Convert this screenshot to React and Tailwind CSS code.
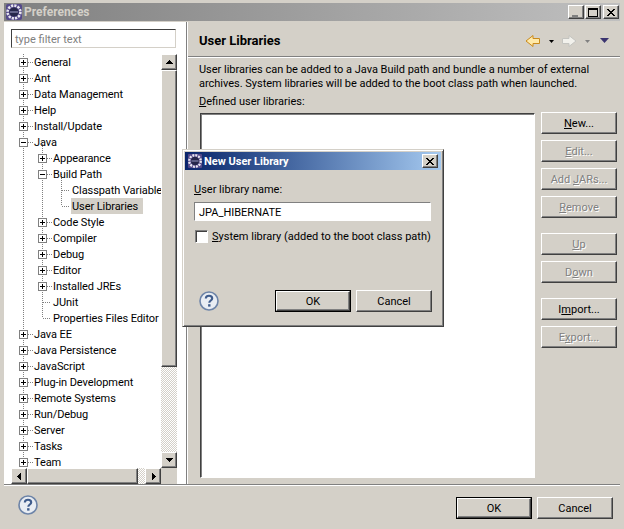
import React from "react";

const raised = "border border-t-white border-l-white border-r-[#404040] border-b-[#404040] shadow-[inset_-1px_-1px_0_#808080] bg-[#d4d0c8]";

function Logo() {
  return (
    <svg width="16" height="16" viewBox="0 0 16 16" className="shrink-0">
      <rect x="0" y="0" width="16" height="16" rx="2" fill="#54498a" />
      <circle cx="8" cy="8" r="6.4" fill="none" stroke="#e8e6ee" strokeWidth="2.6" strokeDasharray="2.2 1.1" />
      <circle cx="8" cy="8" r="4.6" fill="#26264a" />
      <rect x="4" y="7.4" width="8" height="1.2" fill="#8d8db5" />
    </svg>
  );
}

function Help() {
  return (
    <svg width="20" height="20" viewBox="0 0 20 20">
      <circle cx="10" cy="10" r="9" fill="#e9edf3" stroke="#6d84a8" strokeWidth="1.6" />
      <path d="M6.8 7.6C6.8 5.6 8.2 4.8 10 4.8C11.9 4.8 13.2 5.8 13.2 7.4C13.2 9.4 10.3 9.6 10.3 11.8" fill="none" stroke="#3f5c8c" strokeWidth="2.1" />
      <rect x="9.1" y="13.2" width="2.4" height="2.4" fill="#3f5c8c" />
    </svg>
  );
}

function Box({ open }) {
  return (
    <svg width="9" height="9" viewBox="0 0 9 9" className="shrink-0 relative" shapeRendering="crispEdges">
      <rect x="0.5" y="0.5" width="8" height="8" fill="#fff" stroke="#808080" />
      <rect x="2" y="4" width="5" height="1" fill="#000" />
      {!open && <rect x="4" y="2" width="1" height="5" fill="#000" />}
    </svg>
  );
}

function Row({ level, label, kind, selected }) {
  const pl = { 0: "pl-[8px]", 1: "pl-[27px]", 2: "pl-[60px]", 3: "pl-[41px]" }[level];
  return (
    <div className={`h-4 shrink-0 flex items-center whitespace-nowrap tracking-[-0.08px] ${pl}`}>
      {kind && <Box open={kind === "open"} />}
      <span className={`${kind ? "ml-[5px]" : ""} h-4 leading-[18px] ${selected ? "bg-[#d4d0c8] pl-px pr-[5px]" : "px-px"}`}>{label}</span>
    </div>
  );
}

const rows = [
  [0, "General", "closed"], [0, "Ant", "closed"], [0, "Data Management", "closed"], [0, "Help", "closed"],
  [0, "Install/Update", "closed"], [0, "Java", "open"], [1, "Appearance", "closed"], [1, "Build Path", "open"],
  [2, "Classpath Variable"], [2, "User Libraries", null, true], [1, "Code Style", "closed"], [1, "Compiler", "closed"],
  [1, "Debug", "closed"], [1, "Editor", "closed"], [1, "Installed JREs", "closed"], [3, "JUnit"],
  [3, "Properties Files Editor"], [0, "Java EE", "closed"], [0, "Java Persistence", "closed"], [0, "JavaScript", "closed"],
  [0, "Plug-in Development", "closed"], [0, "Remote Systems", "closed"], [0, "Run/Debug", "closed"], [0, "Server", "closed"],
  [0, "Tasks", "closed"], [0, "Team", "closed"],
];

function TreeLines() {
  const h = [];
  rows.forEach((r, i) => {
    const y = 8.5 + 16 * i;
    if (r[0] === 0) h.push([17, 22, y]);
    if (r[0] === 1) h.push([36, 41, y]);
    if (r[0] === 3) h.push([32, 40, y]);
    if (r[0] === 2) h.push([51, 59, y]);
  });
  return (
    <svg width="150" height="414" className="absolute left-0 top-0" shapeRendering="crispEdges">
      <g stroke="#808080" strokeDasharray="1 1" fill="none">
        <path d="M12.5 0V414" />
        <path d="M31.5 88V264" />
        <path d="M50.5 120V152" />
        {h.map(([a, b, y], i) => <path key={i} d={`M${a} ${y}H${b}`} />)}
      </g>
    </svg>
  );
}

function Arrow({ dir }) {
  const tri = {
    up: "M4 2H5V3H6V4H7V5H8V6H1V5H2V4H3V3H4Z",
    down: "M1 2H8V3H7V4H6V5H5V6H4V5H3V4H2V3H1Z",
    left: "M5 1H6V8H5V7H4V6H3V5H2V4H3V3H4V2H5Z",
    right: "M3 1H4V2H5V3H6V4H7V5H6V6H5V7H4V8H3Z",
  }[dir];
  return (
    <svg width="9" height="9" viewBox="0 0 9 9" shapeRendering="crispEdges"><path d={tri} fill="#000" /></svg>
  );
}

function ScrollBtn({ dir }) {
  return <div className={`${raised} w-4 h-4 shrink-0 flex items-center justify-center`}><Arrow dir={dir} /></div>;
}

const checker = "bg-[repeating-conic-gradient(#d4d0c8_0_25%,#ffffff_0_50%)] bg-[length:2px_2px]";

function Btn({ children, disabled, primary, className = "" }) {
  if (primary) {
    return (
      <div className={`w-[76px] h-[22px] border border-black ${className}`}>
        <div className={`${raised} w-full h-full flex items-center justify-center pt-[2px]`}>{children}</div>
      </div>
    );
  }
  return (
    <div className={`${raised} w-[76px] h-[22px] flex items-center justify-center pt-[2px] ${disabled ? "text-[#808080] [text-shadow:1px_1px_0_#fff]" : ""} ${className}`}>
      {children}
    </div>
  );
}

function WinBtn({ children }) {
  return <div className={`${raised} w-4 h-[14px] flex items-center justify-center`}>{children}</div>;
}

function Dialog() {
  return (
    <div className="absolute left-[182px] top-[149px] w-[262px] h-[178px] bg-[#d4d0c8] border border-t-[#d4d0c8] border-l-[#d4d0c8] border-r-[#404040] border-b-[#404040] shadow-[inset_1px_1px_0_#fff,inset_-1px_-1px_0_#808080] p-[2px] flex flex-col">
      <div className="h-[18px] shrink-0 flex items-center bg-gradient-to-r from-[#0a246a] to-[#a6caf0] pl-[2px] pr-[3px]">
        <div className="scale-90"><Logo /></div>
        <span className="ml-px mt-[2px] text-white font-bold">New User Library</span>
        <div className={`${raised} ml-auto w-4 h-[14px] flex items-center justify-center`}>
          <svg width="8" height="7" viewBox="0 0 8 7" shapeRendering="crispEdges"><path d="M0 0L8 7M8 0L0 7" stroke="#000" strokeWidth="1.4" /></svg>
        </div>
      </div>
      <div className="pl-[9px] pr-[9px] flex flex-col flex-1">
        <div className="mt-[12px] h-4 leading-4"><u>U</u>ser library name:</div>
        <div className="mt-[4px] h-[19px] w-[237px] bg-white border border-t-[#808080] border-l-[#808080] border-r-white border-b-white flex items-center pl-[4px] pt-[3px] shrink-0">JPA_HIBERNATE</div>
        <div className="mt-[8px] flex items-center h-[14px] ml-px">
          <div className="w-[13px] h-[13px] shrink-0 bg-white border border-t-[#808080] border-l-[#808080] border-r-white border-b-white shadow-[inset_1px_1px_0_#404040]" />
          <span className="ml-[4px] mt-[2px] whitespace-nowrap"><u>S</u>ystem library (added to the boot class path)</span>
        </div>
        <div className="mt-auto mb-[12px] flex items-center">
          <div className="ml-[5px]"><Help /></div>
          <Btn primary className="ml-[56px]">OK</Btn>
          <Btn className="ml-[5px]">Cancel</Btn>
        </div>
      </div>
    </div>
  );
}

export default function App() {
  return (
    <div className="relative w-[624px] h-[529px] overflow-hidden bg-[#d4d0c8] text-black font-['Roboto','DejaVu_Sans',sans-serif] text-[11px] flex flex-col pl-[4px] pt-[3px] pr-[4px]">
      {/* Title bar */}
      <div className="h-[18px] shrink-0 flex items-center bg-gradient-to-r from-[#808080] to-[#c0c0c0] pl-[2px] pr-px">
        <Logo />
        <span className="ml-[2px] font-bold text-[#d4d0c8] text-[12px]">Preferences</span>
        <div className="ml-auto flex items-center">
          <WinBtn><div className="w-[6px] h-[2px] bg-[#808080] mt-[7px] -ml-[2px]" /></WinBtn>
          <div className="ml-px"><WinBtn><div className="w-[10px] h-[9px] border border-t-2 border-black" /></WinBtn></div>
          <div className="ml-[2px]"><WinBtn><svg width="8" height="7" viewBox="0 0 8 7" shapeRendering="crispEdges"><path d="M0 0L8 7M8 0L0 7" stroke="#000" strokeWidth="1.4" /></svg></WinBtn></div>
        </div>
      </div>

      {/* Main */}
      <div className="h-[462px] shrink-0 flex mt-px">
        <div className="w-[183px] shrink-0 bg-white border-r border-[#808080] pl-[7px] pt-[7px] flex flex-col">
          <div className="w-[165px] h-[19px] shrink-0 border border-t-[#404040] border-l-[#404040] border-r-[#d4d0c8] border-b-[#d4d0c8] flex items-center pl-[3px] pt-[4px] text-[#808080]">type filter text</div>
          <div className="mt-[6px] w-[166px] flex">
            <div className="w-[150px] h-[414px] relative overflow-hidden">
              <TreeLines />
              <div className="relative flex flex-col">
                {rows.map((r) => <Row key={r[1]} level={r[0]} label={r[1]} kind={r[2]} selected={r[3]} />)}
              </div>
            </div>
            <div className="w-4 h-[414px] flex flex-col">
              <ScrollBtn dir="up" />
              <div className={`${raised} w-4 h-[297px]`} />
              <div className={`flex-1 ${checker}`} />
              <ScrollBtn dir="down" />
            </div>
          </div>
          <div className="w-[166px] flex h-4">
            <ScrollBtn dir="left" />
            <div className={`${raised} w-[111px] h-4`} />
            <div className={`w-[7px] ${checker}`} />
            <ScrollBtn dir="right" />
            <div className="w-4 h-4 bg-[#d4d0c8]" />
          </div>
        </div>

        <div className="w-px shrink-0 bg-white" />

        <div className="flex-1 flex flex-col min-w-0">
          <div className="h-[35px] shrink-0 border-b border-[#808080] shadow-[0_1px_0_#fff] flex items-center pl-[11px] pt-[4px]">
            <span className="font-bold text-[13px] text-black">User Libraries</span>
            <div className="ml-auto">
              <svg width="88" height="16" viewBox="0 0 88 16" className="mr-[7px]" shapeRendering="geometricPrecision">
                <path d="M1 8L8 2.5V5.5H14.5V10.5H8V13.5Z" fill="#ffe9a8" stroke="#c98a1c" />
                <path d="M24 7H29L26.5 10Z" fill="#000" />
                <path d="M51 8L44 2.5V5.5H37.5V10.5H44V13.5Z" fill="#f2f1ec" stroke="#c4c4c0" />
                <path d="M60 7H65L62.5 10Z" fill="#808080" />
                <path d="M75 5H84L79.5 10Z" fill="#3b3470" />
              </svg>
            </div>
          </div>
          <div className="flex-1 flex pl-[12px] pr-[3px] min-h-0">
            <div className="flex-1 flex flex-col pb-[6px] min-w-0">
              <div className="mt-[6px] -ml-px leading-[14px] whitespace-nowrap tracking-[-0.02px]">
                User libraries can be added to a Java Build path and bundle a number of external<br />archives. System libraries will be added to the boot class path when launched.
              </div>
              <div className="mt-[3px] -ml-px h-4 leading-4"><u>D</u>efined user libraries:</div>
              <div className="mt-[3px] flex-1 bg-white border border-t-[#404040] border-l-[#404040] border-r-white border-b-white shadow-[inset_1px_1px_0_#808080]" />
            </div>
            <div className="ml-[6px] w-[76px] shrink-0 flex flex-col pt-[55px]">
              <div className="flex flex-col gap-[6px]">
                <Btn><span><u>N</u>ew...</span></Btn>
                <Btn disabled><span><u>E</u>dit...</span></Btn>
                <Btn disabled><span>Add <u>J</u>ARs...</span></Btn>
                <Btn disabled><span><u>R</u>emove</span></Btn>
              </div>
              <div className="flex flex-col gap-[6px] mt-[15px]">
                <Btn disabled><span><u>U</u>p</span></Btn>
                <Btn disabled><span>D<u>o</u>wn</span></Btn>
              </div>
              <div className="flex flex-col gap-[6px] mt-[15px]">
                <Btn><span>I<u>m</u>port...</span></Btn>
                <Btn disabled><span>E<u>x</u>port...</span></Btn>
              </div>
            </div>
          </div>
        </div>
      </div>

      {/* Footer */}
      <div className="flex-1 border-t border-[#808080] shadow-[inset_0_1px_0_#fff] flex items-start pt-[12px]">
        <div className="ml-[14px] -mt-[2px]"><Help /></div>
        <div className="ml-auto mr-[7px] flex">
          <Btn primary>OK</Btn>
          <Btn className="ml-[5px]">Cancel</Btn>
        </div>
      </div>

      <Dialog />
    </div>
  );
}
